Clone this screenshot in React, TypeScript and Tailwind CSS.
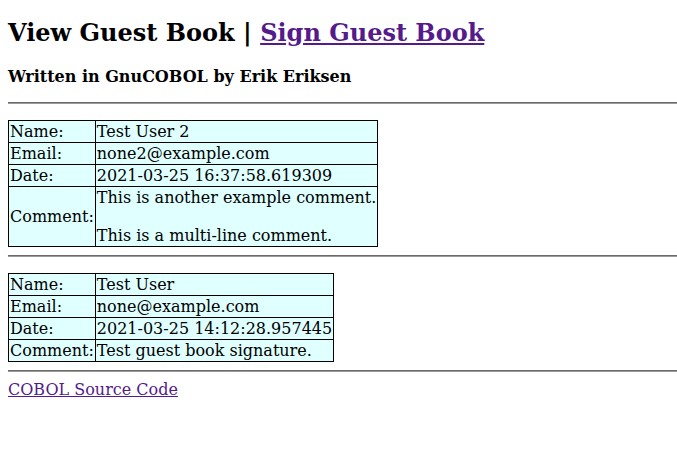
import React from "react";

type Entry = { name: string; email: string; date: string; comment: string[] };

const entries: Entry[] = [
  {
    name: "Test User 2",
    email: "none2@example.com",
    date: "2021-03-25 16:37:58.619309",
    comment: ["This is another example comment.", "", "This is a multi-line comment."],
  },
  {
    name: "Test User",
    email: "none@example.com",
    date: "2021-03-25 14:12:28.957445",
    comment: ["Test guest book signature."],
  },
];

function Hr() {
  return <div className="h-0 border-t border-b border-t-[#6b6b6b] border-b-[#9a9a9a]" />;
}

function Row({ label, children }: { label: string; children: React.ReactNode }) {
  return (
    <tr>
      <td className="border border-black p-px align-middle">{label}</td>
      <td className="border border-black p-px align-middle">{children}</td>
    </tr>
  );
}

function EntryTable({ e }: { e: Entry }) {
  return (
    <table className="border-collapse bg-[#e0ffff] text-[16px] leading-[19px]">
      <tbody>
        <Row label="Name:">{e.name}</Row>
        <Row label="Email:">{e.email}</Row>
        <Row label="Date:">{e.date}</Row>
        <Row label="Comment:">
          {e.comment.map((c, i) => (
            <div key={i} className="h-[19px] whitespace-nowrap">
              {c}
            </div>
          ))}
        </Row>
      </tbody>
    </table>
  );
}

export default function App() {
  return (
    <div className="min-h-[467px] bg-white pl-2 pt-[19px] text-black font-['DejaVu_Serif',serif]">
      <h1 className="text-[24px] font-bold leading-[28px]">
        View Guest Book |{" "}
        <a href="#" className="text-[#551a8b] underline">
          Sign Guest Book
        </a>
      </h1>
      <h4 className="mt-[20px] text-[16px] font-bold leading-[19px]">Written in GnuCOBOL by Erik Eriksen</h4>
      <div className="mt-[16px]">
        <Hr />
      </div>
      {entries.map((e, i) => (
        <div key={i}>
          <div className="mt-4 mb-2">
            <EntryTable e={e} />
          </div>
          <Hr />
        </div>
      ))}
      <div className="mt-2 text-[16px] leading-[19px]">
        <a href="#" className="text-[#551a8b] underline">
          COBOL Source Code
        </a>
      </div>
    </div>
  );
}
